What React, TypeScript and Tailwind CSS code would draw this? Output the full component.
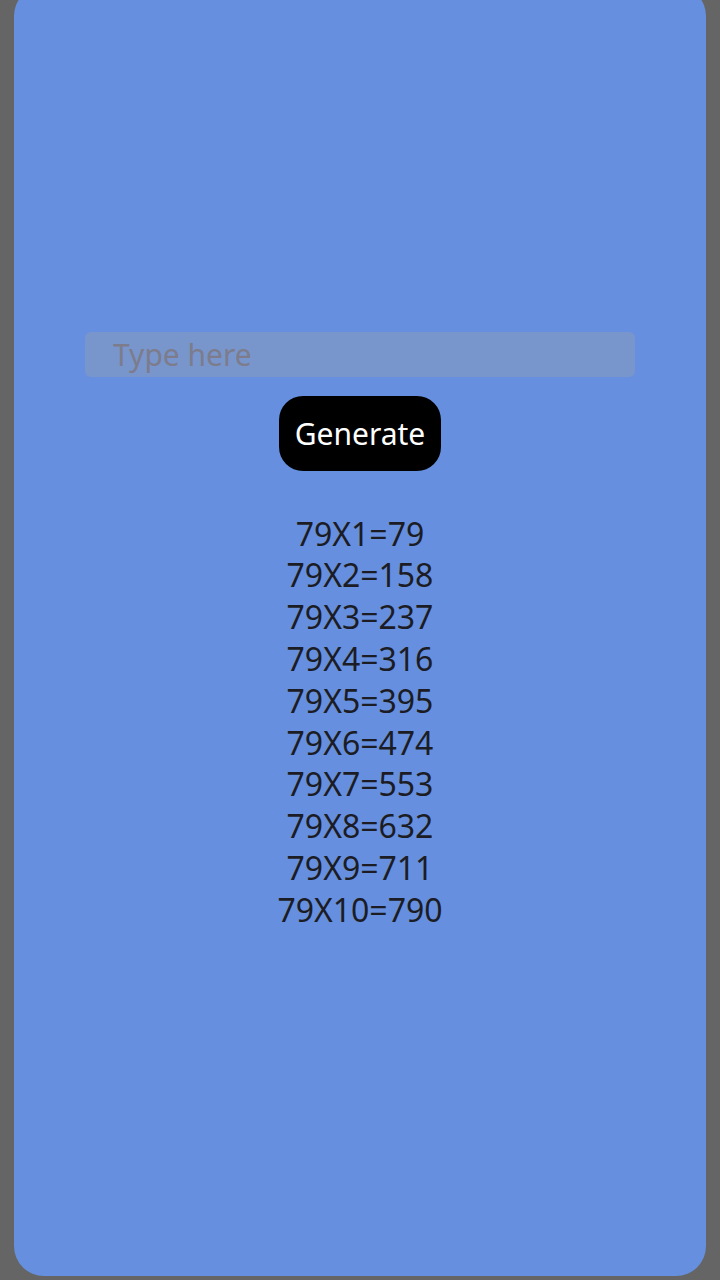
export default function App() {
  const n = 79;
  const rows = Array.from({ length: 10 }, (_, i) => `${n}X${i + 1}=${n * (i + 1)}`);

  return (
    <div className="h-[1280px] overflow-hidden bg-[#656565] px-[14px]" style={{ fontFamily: '"Noto Sans", "Open Sans", sans-serif' }}>
      <div className="-mt-[14px] flex h-[1290px] flex-col items-center justify-center rounded-[30px] bg-[#6690df]">
        <input
          type="text"
          placeholder="Type here"
          className="h-[45px] w-[550px] rounded-md bg-[#7896cc] pl-7 text-[30px] text-[#333] outline-none placeholder:text-[#7c7c8c]"
        />
        <button className="mt-[19px] h-[75px] w-[162px] rounded-[24px] bg-black text-[30px] text-white">Generate</button>
        <div className="mt-[42px] flex flex-col items-center text-[32px] leading-[41.8px] text-[#1c1c24]">
          {rows.map((r) => (
            <div key={r}>{r}</div>
          ))}
        </div>
      </div>
    </div>
  );
}
